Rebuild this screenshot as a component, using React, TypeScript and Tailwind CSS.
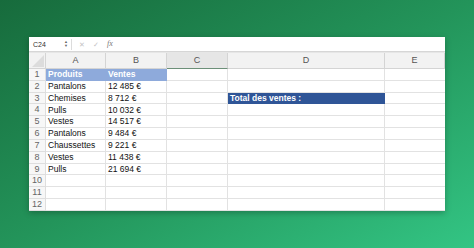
import React from 'react';

const rows: [string, string][] = [
  ['Produits', 'Ventes'],
  ['Pantalons', '12 485 €'],
  ['Chemises', '8 712 €'],
  ['Pulls', '10 032 €'],
  ['Vestes', '14 517 €'],
  ['Pantalons', '9 484 €'],
  ['Chaussettes', '9 221 €'],
  ['Vestes', '11 438 €'],
  ['Pulls', '21 694 €'],
  ['', ''],
  ['', ''],
  ['', ''],
];

const cols = ['A', 'B', 'C', 'D', 'E'];

export default function App() {
  return (
    <div
      className="w-[474px] h-[248px] flex items-center justify-center bg-gradient-to-br from-[#176b3c] via-[#23945a] to-[#33c584]"
      style={{ fontFamily: '"Liberation Sans", Arial, sans-serif' }}
    >
      <div className="w-[416px] h-[174px] bg-white flex flex-col shadow-[0_2px_6px_rgba(0,0,0,0.25)] overflow-hidden">
        {/* Formula bar */}
        <div className="h-[15px] shrink-0 flex items-center border-b border-[#d6d6d6] leading-none">
          <div className="w-[42px] h-full flex items-center justify-between pl-[4px] pr-[3px] text-[7px] text-[#333]">
            <span>C24</span>
            <span className="flex flex-col leading-none text-[4px] text-[#666]">
              <span>▲</span>
              <span>▼</span>
            </span>
          </div>
          <div className="w-px h-[11px] bg-[#dcdcdc]" />
          <div className="flex items-center gap-[8px] pl-[7px] text-[#c4c4c4] text-[7px]">
            <span>✕</span>
            <span>✓</span>
            <span className="italic text-[#777] font-['Liberation_Serif'] text-[8px]">fx</span>
          </div>
        </div>
        <div className="h-[1px] shrink-0 bg-[#e6e6e6]" />
        {/* Grid */}
        <div className="grid grid-cols-[17px_60px_61px_61px_157px_60px] grid-rows-[16px_repeat(12,minmax(0,1fr))] flex-1 min-h-0 text-[8.5px] leading-none">
          <div className="bg-[#f2f2f2] border-b border-r border-[#d4d4d4] relative overflow-hidden">
            <div className="absolute right-[1px] bottom-[1px] w-0 h-0 border-l-[12px] border-l-transparent border-b-[12px] border-b-[#dcdcdc]" />
          </div>
          {cols.map((c) => (
            <div
              key={c}
              className={
                c === 'C'
                  ? 'bg-[#e6e6e6] border-b border-b-[#6c8f78] border-r border-r-[#d4d4d4] flex items-center justify-center text-[#555] text-[9px]'
                  : 'bg-[#f2f2f2] border-b border-r border-[#d4d4d4] flex items-center justify-center text-[#555] text-[9px]'
              }
            >
              {c}
            </div>
          ))}
          {rows.map(([a, b], i) => (
            <React.Fragment key={i}>
              <div className="bg-[#f7f7f7] border-b border-r border-[#dedede] flex items-center justify-center text-[#666] text-[9px]">
                {i + 1}
              </div>
              <div
                className={
                  i === 0
                    ? 'bg-[#8eaadb] text-white font-bold border-b border-[#8eaadb] flex items-center pl-[2px]'
                    : 'border-b border-r border-[#e2e2e2] flex items-center pl-[2px] text-[#111]'
                }
              >
                {a}
              </div>
              <div
                className={
                  i === 0
                    ? 'bg-[#8eaadb] text-white font-bold border-b border-[#8eaadb] flex items-center pl-[2px]'
                    : 'border-b border-r border-[#e2e2e2] flex items-center pl-[2px] text-[#111]'
                }
              >
                {b}
              </div>
              <div className="border-b border-r border-[#e2e2e2]" />
              {i === 2 ? (
                <div className="bg-[#2f5597] text-white font-bold flex items-center pl-[2px] border-b border-[#2f5597]">
                  Total des ventes :
                </div>
              ) : (
                <div className="border-b border-r border-[#e2e2e2]" />
              )}
              <div className="border-b border-[#e2e2e2]" />
            </React.Fragment>
          ))}
        </div>
      </div>
    </div>
  );
}
